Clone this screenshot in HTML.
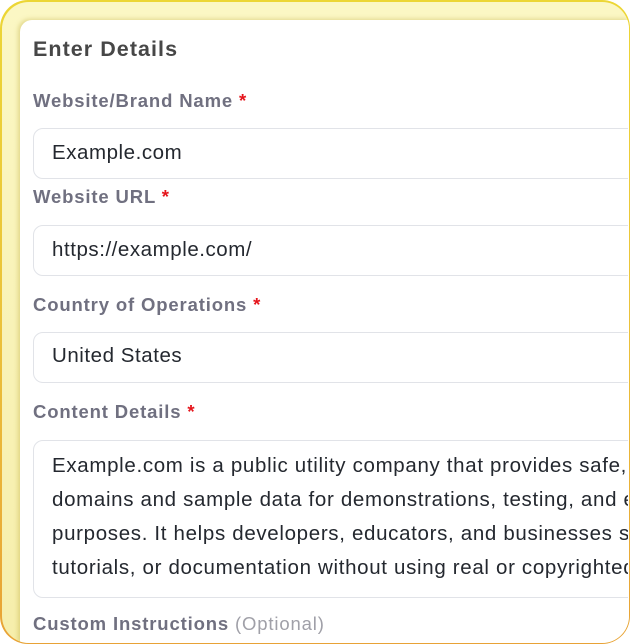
<!DOCTYPE html>
<html><head><meta charset="utf-8"><style>
*{margin:0;padding:0;box-sizing:border-box}
body{width:630px;height:644px;overflow:hidden;background:#fff;font-family:"Liberation Sans",Arial,sans-serif}
.outer{position:absolute;left:0;top:0;width:630px;height:644px;border-radius:28px;padding:1.5px;background:linear-gradient(180deg,#ecd635 0%,#ebc23a 50%,#e8a236 100%)}
.inner{position:relative;width:100%;height:100%;border-radius:27px;overflow:hidden;background:linear-gradient(180deg,#fbf7c4,#f6eeab)}
.card{position:absolute;left:18px;top:18px;right:0;bottom:0;background:#fff;border-top-left-radius:12px;box-shadow:-2px -1px 4px rgba(180,160,40,.35)}
.clip{position:absolute;left:0;top:0;width:628px;height:644px;overflow:hidden}
.t{position:absolute;left:33px;font-weight:bold;white-space:nowrap}
.title{top:37px;font-size:21.5px;letter-spacing:1.05px;color:#474747}
.lab{font-size:18.5px;letter-spacing:0.85px;color:#707080}
.lab b{color:#e5141b;font-weight:bold}
.box{position:absolute;left:33px;width:640px;border:1px solid #e1e3e8;border-radius:10px;background:#fff}
.val{position:absolute;left:52px;font-size:20.5px;letter-spacing:0.55px;color:#24282f;white-space:nowrap}
.ta{position:absolute;left:52px;top:449px;font-size:20.5px;letter-spacing:0.67px;line-height:34px;color:#24282f;white-space:nowrap}
.opt{font-weight:normal;color:#a0a0a8}
</style></head><body>
<div class="outer"><div class="inner"><div class="card"></div></div></div>
<div class="clip">
<div class="t title">Enter Details</div>
<div class="t lab" style="top:90px">Website/Brand Name <b>*</b></div>
<div class="box" style="top:128px;height:51px"></div>
<div class="val" style="top:141px">Example.com</div>
<div class="t lab" style="top:186px">Website URL <b>*</b></div>
<div class="box" style="top:225px;height:51px"></div>
<div class="val" style="top:238px">https://example.com/</div>
<div class="t lab" style="top:294px">Country of Operations <b>*</b></div>
<div class="box" style="top:332px;height:51px"></div>
<div class="val" style="top:344px">United States</div>
<div class="t lab" style="top:401px">Content Details <b>*</b></div>
<div class="box" style="top:440px;height:158px"></div>
<div class="ta">Example.com is a public utility company that provides safe, reserved<br>domains and sample data for demonstrations, testing, and educational<br>purposes. It helps developers, educators, and businesses showcase<br>tutorials, or documentation without using real or copyrighted content.</div>
<div class="t lab" style="top:613px">Custom Instructions <span class="opt">(Optional)</span></div>
</div>
</body></html>
